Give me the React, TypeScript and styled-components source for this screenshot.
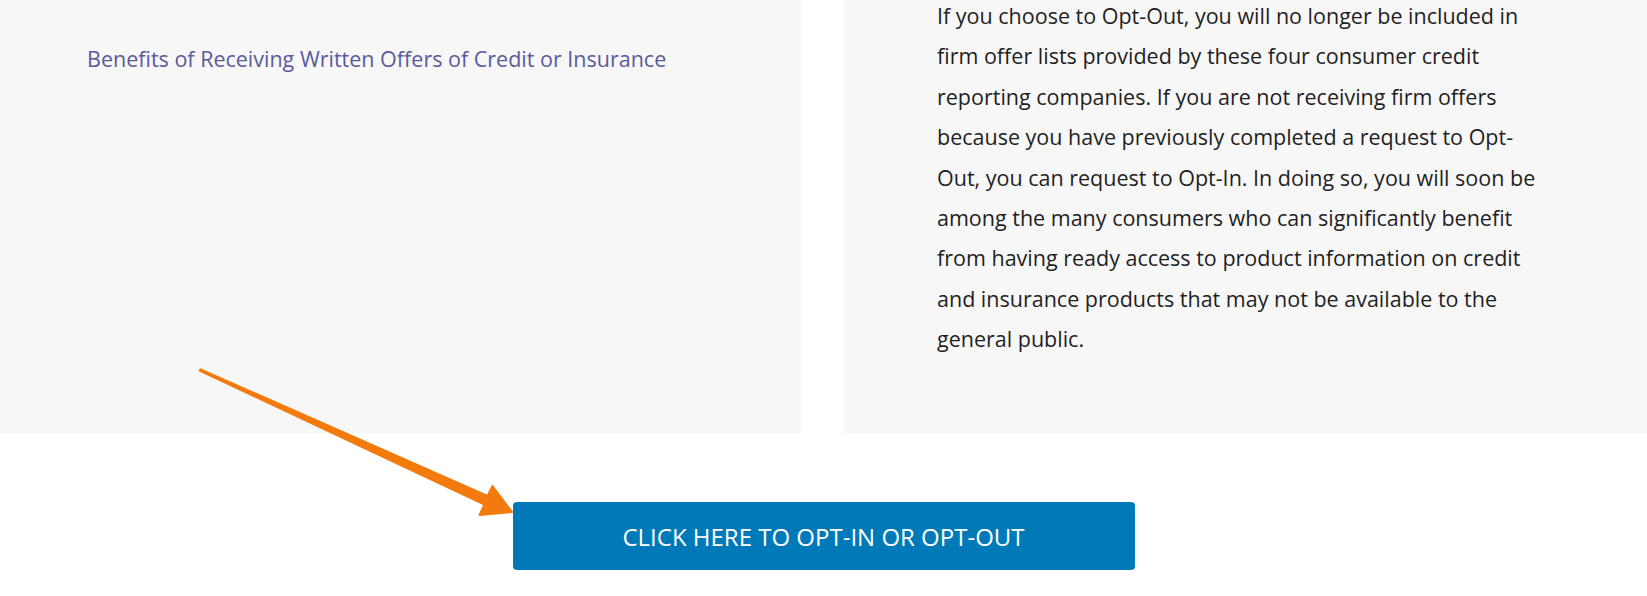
import React from "react";
import styled, { createGlobalStyle } from "styled-components";

const GlobalStyle = createGlobalStyle`
  html, body {
    margin: 0;
    padding: 0;
    background: #ffffff;
  }
  body {
    font-family: "Open Sans", "Liberation Sans", Arial, sans-serif;
    color: #222222;
  }
`;

const Page = styled.div`
  position: relative;
  width: 1647px;
  height: 596px;
  overflow: hidden;
`;

const Columns = styled.div`
  display: grid;
  grid-template-columns: 801px 1fr;
  gap: 43px;
  height: 433px;
`;

const Panel = styled.div<{ $padLeft: number; $padRight: number }>`
  background: #f7f7f7;
  padding: 0 ${(p) => p.$padRight}px 0 ${(p) => p.$padLeft}px;
  overflow: hidden;
`;

const LinkItem = styled.a`
  display: inline-block;
  margin-top: 44px;
  font-size: 21.5px;
  line-height: 30px;
  color: #5a5b9c;
  text-decoration: none;
  cursor: pointer;
`;

const Paragraph = styled.p`
  margin: -4px 0 0;
  font-size: 21.5px;
  line-height: 40.4px;
  color: #1f1f1f;
`;

const ButtonRow = styled.div`
  display: flex;
  justify-content: center;
  padding-top: 69px;
`;

const OptButton = styled.button`
  width: 622px;
  height: 68px;
  border: none;
  border-radius: 4px;
  background: #0079b8;
  color: #ffffff;
  font-family: "Open Sans", "Liberation Sans", Arial, sans-serif;
  font-size: 24px;
  text-transform: uppercase;
  cursor: pointer;
`;

// annotation arrow drawn over the page
const ArrowLayer = styled.svg`
  position: absolute;
  left: 0;
  top: 0;
  pointer-events: none;
`;

const App: React.FC = () => {
  return (
    <Page>
      <GlobalStyle />
      <Columns>
        <Panel $padLeft={87} $padRight={40}>
          <LinkItem>Benefits of Receiving Written Offers of Credit or Insurance</LinkItem>
        </Panel>
        <Panel $padLeft={93} $padRight={100}>
          <Paragraph>
            If you choose to Opt-Out, you will no longer be included in firm offer lists provided by these four
            consumer credit reporting companies. If you are not receiving firm offers because you have previously
            completed a request to Opt-Out, you can request to Opt-In. In doing so, you will soon be among the many
            consumers who can significantly benefit from having ready access to product information on credit and
            insurance products that may not be available to the general public.
          </Paragraph>
        </Panel>
      </Columns>
      <ButtonRow>
        <OptButton>Click here to Opt-In or Opt-Out</OptButton>
      </ButtonRow>
      <ArrowLayer width="1647" height="596" viewBox="0 0 1647 596">
        <polygon
          points="200.6,369.3 487.5,496 492.5,486 512,512 479.5,515 484.5,504.5 199.6,370.6"
          fill="#f37a0c"
          stroke="#f37a0c"
          strokeWidth="2"
          strokeLinejoin="round"
        />
      </ArrowLayer>
    </Page>
  );
};

export default App;
